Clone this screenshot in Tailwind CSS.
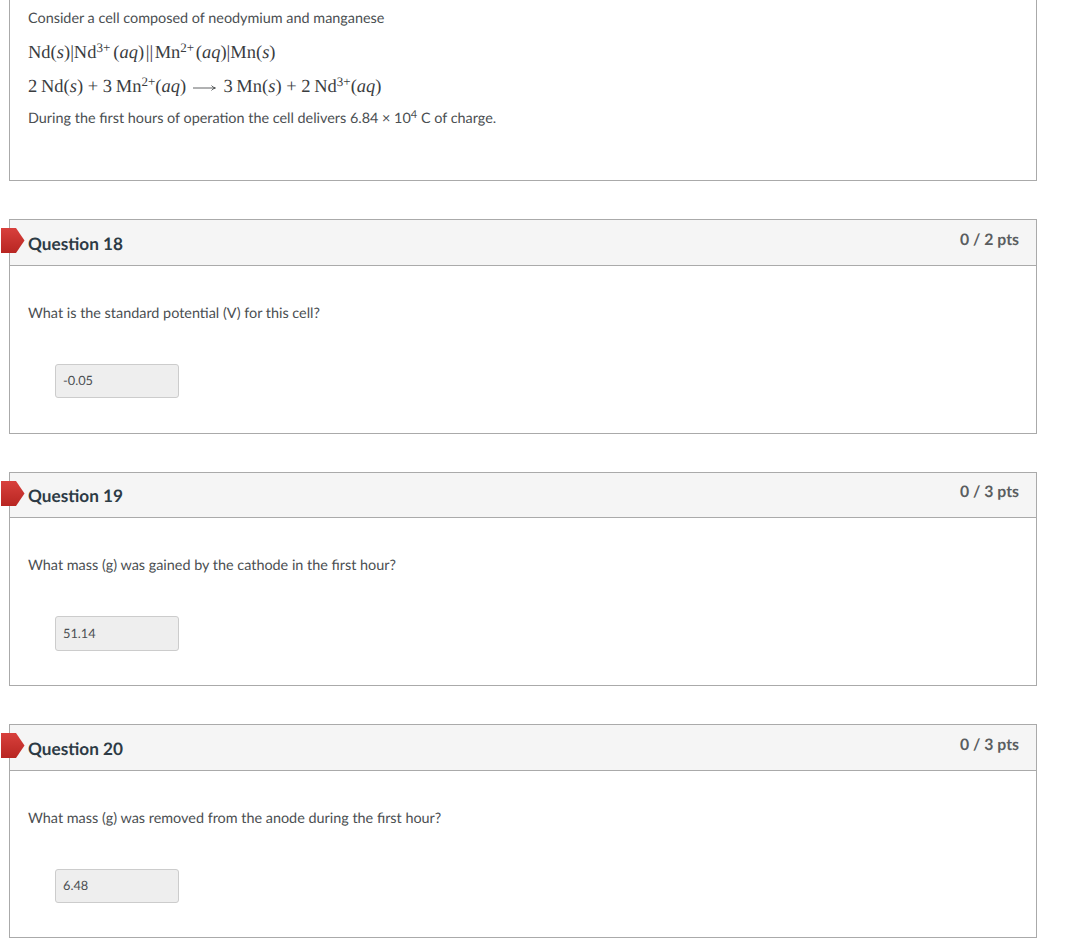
<!DOCTYPE html>
<html lang="en">
<head>
  <meta charset="UTF-8" />
  <title>Quiz results</title>
  <script src="https://cdn.jsdelivr.net/npm/@tailwindcss/browser@4"></script>
</head>
<body class="bg-white font-['Lato',sans-serif] text-[14.4px] text-[#4b4f52] [text-rendering:geometricPrecision]">
  <main class="w-[1066px] h-[942px] overflow-hidden">

    <!-- Intro card -->
    <section class="ml-[9px] w-[1028px] h-[181px] border border-t-0 border-[#aaaaaa] px-[18px] pt-[10px]">
      <p class="h-[17px] leading-[17px]">Consider a cell composed of neodymium and manganese</p>
      <p class="mt-[15px] h-[22px] leading-[22px] font-['Liberation_Serif',serif] text-[18.5px] text-[#3a3d3f] whitespace-nowrap">Nd(<i>s</i>)|Nd<sup class="text-[13px] leading-none mr-[1.500px]">3+</sup>&#8202;(<i>aq</i>)<span class="mx-[1.500px]">||</span>Mn<sup class="text-[13px] leading-none">2+</sup>&#8202;(<i>aq</i>)|Mn(<i>s</i>)</p>
      <p class="mt-[12px] h-[22px] leading-[22px] font-['Liberation_Serif',serif] text-[18.5px] text-[#3a3d3f] whitespace-nowrap">2&#8201;Nd(<i>s</i>) + 3&#8201;Mn<sup class="text-[13px] leading-none">2+</sup>(<i>aq</i>) <span class="inline-block w-[25px] ml-[1px] mr-[2px] align-[-1px]"><svg width="25" height="10" viewBox="0 0 25 10" fill="none" stroke="#3a3d3f" stroke-width="0.8"><path d="M1 5h22M19.500 2.500q1 1.800 4 2.500q-3 .7-4 2.500"/></svg></span> 3&#8201;Mn(<i>s</i>) + 2&#8201;Nd<sup class="text-[13px] leading-none">3+</sup>(<i>aq</i>)</p>
      <p class="mt-[12px] h-[17px] leading-[17px]">During the first hours of operation the cell delivers 6.84 × 10<sup class="text-[11px] leading-none">4</sup> C of charge.</p>
    </section>

    <!-- Question 18 -->
    <section class="relative mt-[38px] ml-[9px] w-[1028px] h-[215px] border border-[#aaaaaa]">
      <svg class="absolute left-[-9px] top-[8px]" width="24" height="26" viewBox="0 0 24 26">
        <defs><linearGradient id="flag18" x1="0" y1="0" x2="0" y2="1"><stop offset="0" stop-color="#d8403c"/><stop offset="1" stop-color="#b82622"/></linearGradient></defs>
        <path d="M0 0H15L23.500 12.500L15 25H0Z" fill="url(#flag18)"/>
      </svg>
      <header class="flex justify-between h-[46px] bg-[#f5f5f5] border-b border-[#aaaaaa] pl-[18px] pr-[17px]">
        <h2 class="pt-[14px] text-[17.2px] leading-[20px] font-bold text-[#2d3b45]">Question 18</h2>
        <span class="pt-[10px] text-[15.8px] leading-[20px] font-bold text-[#5a5d60]">0 / 2 pts</span>
      </header>
      <p class="pl-[18px] pt-[39px] h-[17px] leading-[17px] box-content">What is the standard potential (V) for this cell?</p>
      <div class="ml-[45px] mt-[42px] w-[124px] h-[34px] bg-[#eeeeee] border border-[#cccccc] rounded-[3px] pl-[7px] text-[12.8px] leading-[31px]">-0.05</div>
    </section>

    <!-- Question 19 -->
    <section class="relative mt-[38px] ml-[9px] w-[1028px] h-[214px] border border-[#aaaaaa]">
      <svg class="absolute left-[-9px] top-[8px]" width="24" height="26" viewBox="0 0 24 26">
        <defs><linearGradient id="flag19" x1="0" y1="0" x2="0" y2="1"><stop offset="0" stop-color="#d8403c"/><stop offset="1" stop-color="#b82622"/></linearGradient></defs>
        <path d="M0 0H15L23.500 12.500L15 25H0Z" fill="url(#flag19)"/>
      </svg>
      <header class="flex justify-between h-[45px] bg-[#f5f5f5] border-b border-[#aaaaaa] pl-[18px] pr-[17px]">
        <h2 class="pt-[13px] text-[17.2px] leading-[20px] font-bold text-[#2d3b45]">Question 19</h2>
        <span class="pt-[9px] text-[15.8px] leading-[20px] font-bold text-[#5a5d60]">0 / 3 pts</span>
      </header>
      <p class="pl-[18px] pt-[39px] h-[17px] leading-[17px] box-content">What mass (g) was gained by the cathode in the first hour?</p>
      <div class="ml-[45px] mt-[42px] w-[124px] h-[35px] bg-[#eeeeee] border border-[#cccccc] rounded-[3px] pl-[7px] text-[12.8px] leading-[32px]">51.14</div>
    </section>

    <!-- Question 20 -->
    <section class="relative mt-[38px] ml-[9px] w-[1028px] h-[214px] border border-[#aaaaaa]">
      <svg class="absolute left-[-9px] top-[8px]" width="24" height="26" viewBox="0 0 24 26">
        <defs><linearGradient id="flag20" x1="0" y1="0" x2="0" y2="1"><stop offset="0" stop-color="#d8403c"/><stop offset="1" stop-color="#b82622"/></linearGradient></defs>
        <path d="M0 0H15L23.500 12.500L15 25H0Z" fill="url(#flag20)"/>
      </svg>
      <header class="flex justify-between h-[46px] bg-[#f5f5f5] border-b border-[#aaaaaa] pl-[18px] pr-[17px]">
        <h2 class="pt-[14px] text-[17.2px] leading-[20px] font-bold text-[#2d3b45]">Question 20</h2>
        <span class="pt-[10px] text-[15.8px] leading-[20px] font-bold text-[#5a5d60]">0 / 3 pts</span>
      </header>
      <p class="pl-[18px] pt-[39px] h-[17px] leading-[17px] box-content">What mass (g) was removed from the anode during the first hour?</p>
      <div class="ml-[45px] mt-[42px] w-[124px] h-[34px] bg-[#eeeeee] border border-[#cccccc] rounded-[3px] pl-[7px] text-[12.8px] leading-[31px]">6.48</div>
    </section>

  </main>
</body>
</html>
